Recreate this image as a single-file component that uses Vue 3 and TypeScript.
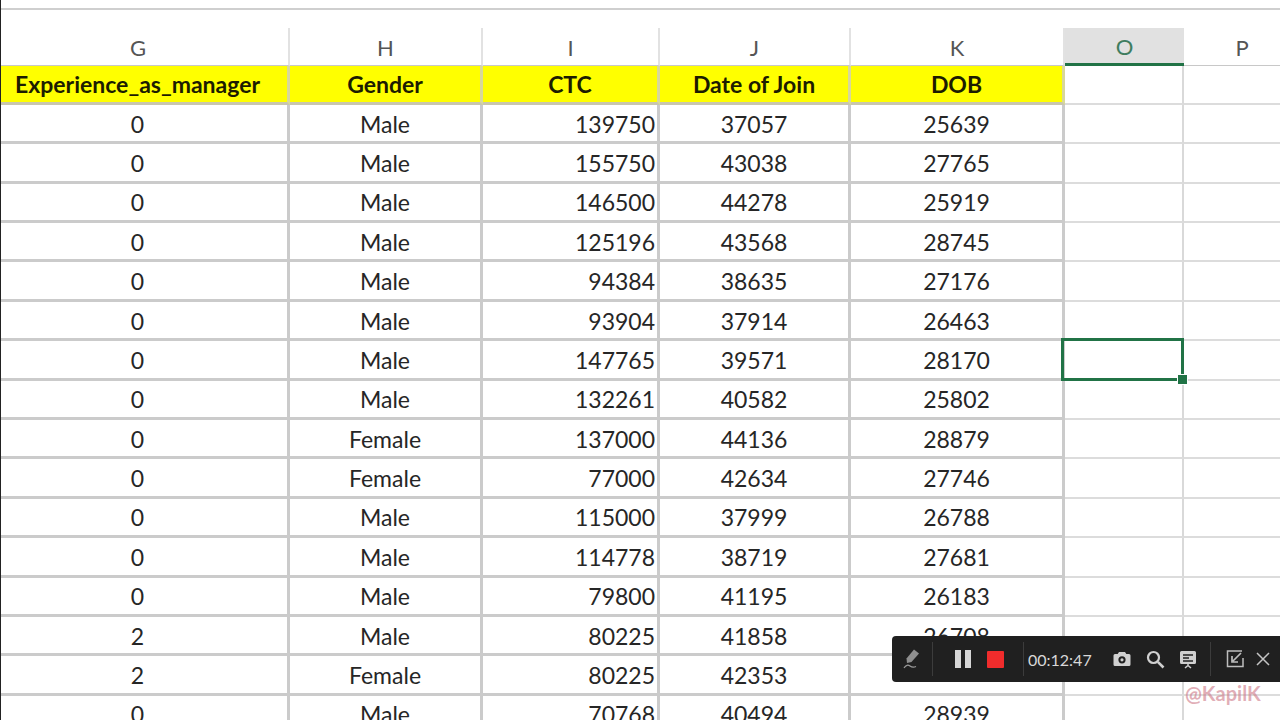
<script setup lang="ts">
interface Row { exp: string; gender: string; ctc: string; join: string; dob: string }
const columns = ['G', 'H', 'I', 'J', 'K', 'O', 'P']
const rows: Row[] = [
  { exp: '0', gender: 'Male', ctc: '139750', join: '37057', dob: '25639' },
  { exp: '0', gender: 'Male', ctc: '155750', join: '43038', dob: '27765' },
  { exp: '0', gender: 'Male', ctc: '146500', join: '44278', dob: '25919' },
  { exp: '0', gender: 'Male', ctc: '125196', join: '43568', dob: '28745' },
  { exp: '0', gender: 'Male', ctc: '94384', join: '38635', dob: '27176' },
  { exp: '0', gender: 'Male', ctc: '93904', join: '37914', dob: '26463' },
  { exp: '0', gender: 'Male', ctc: '147765', join: '39571', dob: '28170' },
  { exp: '0', gender: 'Male', ctc: '132261', join: '40582', dob: '25802' },
  { exp: '0', gender: 'Female', ctc: '137000', join: '44136', dob: '28879' },
  { exp: '0', gender: 'Female', ctc: '77000', join: '42634', dob: '27746' },
  { exp: '0', gender: 'Male', ctc: '115000', join: '37999', dob: '26788' },
  { exp: '0', gender: 'Male', ctc: '114778', join: '38719', dob: '27681' },
  { exp: '0', gender: 'Male', ctc: '79800', join: '41195', dob: '26183' },
  { exp: '2', gender: 'Male', ctc: '80225', join: '41858', dob: '26708' },
  { exp: '2', gender: 'Female', ctc: '80225', join: '42353', dob: '' },
  { exp: '0', gender: 'Male', ctc: '70768', join: '40494', dob: '28939' },
]
</script>

<template>
  <div class="page">
    <div class="top-rule"></div>
    <div class="sheet">
      <div class="row head">
        <div v-for="c in columns" :key="c" class="hcell" :class="{ active: c === 'O' }">{{ c }}</div>
      </div>
      <div class="row titles">
        <div class="cell title">Experience_as_manager</div>
        <div class="cell title">Gender</div>
        <div class="cell title">CTC</div>
        <div class="cell title">Date of Join</div>
        <div class="cell title">DOB</div>
        <div class="cell blank"></div>
        <div class="cell blank"></div>
      </div>
      <div v-for="(r, i) in rows" :key="i" class="row">
        <div class="cell">{{ r.exp }}</div>
        <div class="cell">{{ r.gender }}</div>
        <div class="cell num">{{ r.ctc }}</div>
        <div class="cell">{{ r.join }}</div>
        <div class="cell">{{ r.dob }}</div>
        <div class="cell blank" :class="{ selected: i === 6 }"></div>
        <div class="cell blank"></div>
      </div>
    </div>

    <div class="recorder">
      <div class="rec-section pen">
        <svg width="22" height="24" viewBox="0 0 22 24" fill="none">
          <path d="M13 2.5l5 4-7.5 8.5-4.5 1-.5-4.5z" fill="#8f8f8f" />
          <path d="M3 21c2-3 4-3.5 6-2s4 1.500 6 .5" stroke="#9a9a9a" stroke-width="1.300" />
        </svg>
      </div>
      <div class="rec-section controls">
        <span class="pause"><i></i><i></i></span>
        <span class="stop"></span>
      </div>
      <div class="rec-section timer">
        <span class="time">00:12:47</span>
        <svg class="ico-cam" width="18" height="16" viewBox="0 0 18 16">
          <path fill-rule="evenodd" d="M6 1h6l1.300 2H16a1.500 1.500 0 0 1 1.500 1.500v9A1.500 1.500 0 0 1 16 15H2a1.500 1.500 0 0 1-1.500-1.500v-9A1.500 1.500 0 0 1 2 3h2.700zM9 5.200a3.600 3.600 0 1 0 0 7.200 3.600 3.600 0 0 0 0-7.200zm0 2a1.600 1.600 0 1 1 0 3.200 1.600 1.600 0 0 1 0-3.200z" fill="#d0d0d0" />
        </svg>
        <svg class="ico-search" width="19" height="19" viewBox="0 0 19 19" fill="none">
          <circle cx="7.500" cy="7.500" r="5.500" stroke="#d0d0d0" stroke-width="2.200" />
          <path d="M11.800 11.800l5.700 5.700" stroke="#d0d0d0" stroke-width="2.600" />
        </svg>
        <svg class="ico-board" width="18" height="19" viewBox="0 0 18 19" fill="none">
          <path d="M2.500 1h13A1.500 1.500 0 0 1 17 2.500v10a1.500 1.500 0 0 1-1.500 1.500h-13A1.500 1.500 0 0 1 1 12.500v-10A1.500 1.500 0 0 1 2.500 1z" fill="#d0d0d0" />
          <path d="M4 5h10M4 8h6M4 11h10" stroke="#202020" stroke-width="1.300" />
          <path d="M9 14v2M6 18l3-2.500 3 2.500" stroke="#d0d0d0" stroke-width="1.500" />
        </svg>
      </div>
      <div class="rec-section end">
        <svg width="18" height="18" viewBox="0 0 18 18" fill="none">
          <path d="M16 1H1.500v15.500H17V8" stroke="#bdbdbd" stroke-width="1.500" />
          <path d="M15 3l-8 8M6 6v6h6" stroke="#bdbdbd" stroke-width="1.700" />
        </svg>
        <svg width="14" height="14" viewBox="0 0 14 14" fill="none">
          <path d="M1 1l12 12M13 1L1 13" stroke="#c4c4c4" stroke-width="1.500" />
        </svg>
      </div>
    </div>
    <div class="mark">@KapilK</div>
  </div>
</template>

<style scoped>
.page {
  position: relative;
  width: 1280px;
  height: 720px;
  overflow: hidden;
  background: #fff;
  border-left: 1px solid #222;
  box-sizing: border-box;
  font-family: Lato, "Liberation Sans", sans-serif;
  color: #262626;
}
.top-rule {
  height: 2px;
  margin-top: 8px;
  margin-bottom: 18px;
  background: #cfcfcf;
}
.sheet {
  margin-left: -13px;
  width: 1312px;
}
.row {
  display: grid;
  grid-template-columns: 302px 193px 177px 191px 214px 119px 116px;
  height: 39.4px;
}
.head {
  height: 37.5px;
  border-bottom: 0;
}
.hcell {
  display: flex;
  align-items: center;
  justify-content: center;
  box-sizing: border-box;
  border-right: 2px solid #e2e2e2;
  border-bottom: 1px solid #c8c8c8;
  font-size: 22px;
  color: #555;
  padding-top: 2px;
}
.hcell:nth-child(n + 6) {
  border-right: 0;
}
.hcell.active {
  background: #e1e1e1;
  color: #3f7d5f;
  border-bottom: 3px solid #217346;
}
.titles {
  height: 39.4px;
}
.cell {
  position: relative;
  display: flex;
  align-items: center;
  justify-content: center;
  box-sizing: border-box;
  border-right: 3px solid #cbcbcb;
  border-bottom: 3px solid #cbcbcb;
  font-size: 23px;
  white-space: nowrap;
  padding-top: 1px;
}
.title {
  background: #ffff00;
  font-weight: 700;
  color: #1c1c00;
  border-bottom-color: #c9c6ae;
  border-right-color: #d8d89a;
}
.num {
  justify-content: flex-end;
  padding-right: 2px;
}
.blank {
  border-right: 2px solid #d9d9d9;
  border-bottom: 2px solid #dcdcdc;
}
.selected::after {
  content: "";
  position: absolute;
  left: -4px;
  right: -2px;
  top: -3px;
  bottom: -2px;
  border: 3px solid #217346;
}
.selected::before {
  content: "";
  position: absolute;
  z-index: 1;
  right: -6px;
  bottom: -6px;
  width: 9px;
  height: 9px;
  background: #217346;
  border: 1px solid #fff;
}
.recorder {
  position: absolute;
  left: 891px;
  top: 636px;
  width: 389px;
  height: 46px;
  display: flex;
  align-items: center;
  background: #202020;
  border-radius: 4px 0 0 4px;
}
.rec-section {
  height: 34px;
  display: flex;
  align-items: center;
  box-sizing: border-box;
}
.pen {
  width: 41px;
  justify-content: center;
  border-right: 1px solid #3c3c3c;
}
.controls {
  width: 91px;
  padding-left: 22px;
  gap: 16px;
  border-right: 1px solid #3c3c3c;
}
.pause {
  display: flex;
  gap: 4px;
}
.pause i {
  display: block;
  width: 6px;
  height: 18px;
  background: #d6d6d6;
}
.stop {
  width: 17px;
  height: 17px;
  background: #f02c2c;
  border-radius: 1px;
}
.timer {
  width: 187px;
  padding-left: 4px;
  border-right: 1px solid #3c3c3c;
}
.time {
  font-size: 16px;
  color: #d8d8d8;
  width: 85px;
  white-space: nowrap;
}
.ico-search {
  margin-left: 15px;
}
.ico-board {
  margin-left: 14px;
}
.end {
  flex: 1;
  padding-left: 15px;
  gap: 12px;
}
.mark {
  position: absolute;
  left: 1184px;
  top: 681px;
  font-size: 20px;
  font-weight: 700;
  color: rgba(205, 120, 135, 0.6);
}
</style>

<style>
html, body { margin: 0; background: #fff; overflow: hidden; }
</style>
